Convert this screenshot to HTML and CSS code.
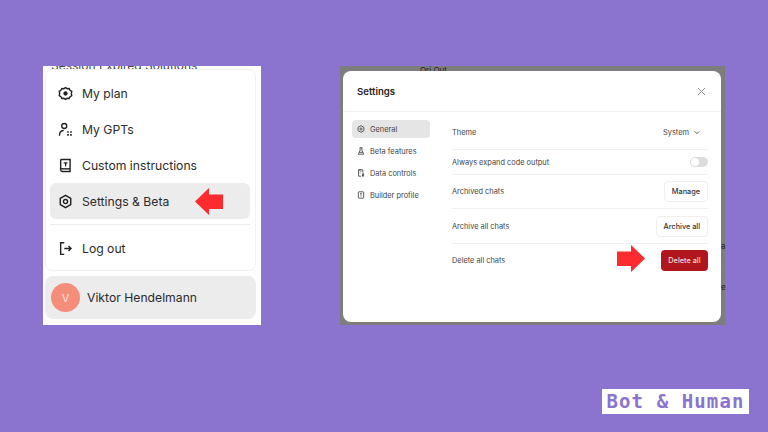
FILE: index.html
```html
<!DOCTYPE html>
<html lang="en">
<head>
    <meta charset="UTF-8">
    <meta name="viewport" content="width=device-width, initial-scale=1.0">
    <title>Delete all chats</title>
    <link rel="stylesheet" href="styles.css">
</head>
<body>
<div class="stage">

    <!-- left screenshot: account menu -->
    <div class="menu-shot">
        <div class="clipped-title">Session Expired Solutions</div>
        <div class="menu-card">
            <div class="menu-item">
                <svg class="menu-icon" viewBox="0 0 18 18"><path d="M9 2l2 1.2 2.400-.1 1.100 2.100 2 1.300L16 9l.5 2.500-2 1.300-1.100 2.100-2.400-.1L9 16l-2-1.200-2.400.1-1.100-2.100-2-1.300L2 9l-.5-2.500 2-1.300 1.100-2.100 2.400.1z" fill="none" stroke="#222" stroke-width="1.700"/><circle cx="9" cy="9" r="2.600" fill="#222"/></svg>
                <span>My plan</span>
            </div>
            <div class="menu-item">
                <svg class="menu-icon" viewBox="0 0 18 18"><circle cx="7.500" cy="4.800" r="3" fill="none" stroke="#222" stroke-width="1.600"/><path d="M1.800 16c0-3.400 1.600-5.400 4.400-5.800" fill="none" stroke="#222" stroke-width="1.600" stroke-linecap="round"/><path d="M11 11h2v2h-2zM14.500 11h2v2h-2zM11 14.500h2v2h-2zM14.500 14.500h2v2h-2z" fill="#222"/></svg>
                <span>My GPTs</span>
            </div>
            <div class="menu-item">
                <svg class="menu-icon" viewBox="0 0 18 18"><path d="M4 1.800h10.500v14.400H5.200a2 2 0 0 1-2-2V2.600z" fill="none" stroke="#222" stroke-width="1.700"/><path d="M3.500 13h11" stroke="#222" stroke-width="1.700"/><path d="M6.800 5h4.600v1.600H9.900V10H8.300V6.600H6.800z" fill="#222"/></svg>
                <span>Custom instructions</span>
            </div>
            <div class="menu-item menu-item-active">
                <svg class="menu-icon" viewBox="0 0 18 18"><path d="M9 1.600l6.300 3.700v7.400L9 16.400l-6.300-3.700V5.300z" fill="none" stroke="#222" stroke-width="1.700" stroke-linejoin="round"/><circle cx="9" cy="9" r="2.500" fill="none" stroke="#222" stroke-width="1.700"/></svg>
                <span>Settings &amp; Beta</span>
            </div>
            <div class="menu-divider"></div>
            <div class="menu-item">
                <svg class="menu-icon" viewBox="0 0 18 18"><path d="M7.500 2H3.200v14h4.300" fill="none" stroke="#222" stroke-width="1.700"/><path d="M7.500 9h8M12.600 6l3 3-3 3" fill="none" stroke="#222" stroke-width="1.700"/></svg>
                <span>Log out</span>
            </div>
        </div>
        <div class="user-row">
            <div class="avatar">V</div>
            <span>Viktor Hendelmann</span>
        </div>
        <svg class="arrow arrow-left" viewBox="0 0 28 27"><path d="M0 13.500L14 0v6.500h14v14.500H14v6z" fill="#fb2b2f"/></svg>
    </div>

    <!-- right screenshot: settings dialog -->
    <div class="settings-shot">
        <span class="peek peek-top">Ori Out</span>
        <span class="peek peek-a">a</span>
        <span class="peek peek-e">e</span>
        <div class="dialog">
            <div class="dialog-head">
                <h2>Settings</h2>
                <svg class="close-icon" viewBox="0 0 10 10"><path d="M1 1l8 8M9 1l-8 8" stroke="#8a8a8a" stroke-width="1.100"/></svg>
            </div>
            <div class="dialog-body">
                <div class="side-nav">
                    <div class="side-item side-item-active">
                        <svg class="side-icon" viewBox="0 0 12 12"><path d="M6 1l4.400 2.500v5L6 11 1.600 8.500v-5z" fill="none" stroke="#333" stroke-width="1.200"/><circle cx="6" cy="6" r="1.600" fill="none" stroke="#333" stroke-width="1.100"/></svg>
                        <span>General</span>
                    </div>
                    <div class="side-item">
                        <svg class="side-icon" viewBox="0 0 12 12"><path d="M4 1.200h4M4.700 1.200v3.600L2 10.800h8L7.300 4.800V1.200M3.400 8h5.200" fill="none" stroke="#333" stroke-width="1.200"/></svg>
                        <span>Beta features</span>
                    </div>
                    <div class="side-item">
                        <svg class="side-icon" viewBox="0 0 12 12"><path d="M6 1.200H2.400v9.600H6M2.400 1.200h6.400v4.300" fill="none" stroke="#333" stroke-width="1.200"/><path d="M4 3.800h3M4 6.200h2M8 7h2.500v1.300H8zM7.500 9.500H10v1.300H7.500z" stroke="#333" fill="#333" stroke-width="0.600"/></svg>
                        <span>Data controls</span>
                    </div>
                    <div class="side-item">
                        <svg class="side-icon" viewBox="0 0 12 12"><rect x="2" y="1.200" width="8" height="9.600" rx="1" fill="none" stroke="#333" stroke-width="1.200"/><path d="M4.800 3.400h2.400v1H6.500v3.800h-1V4.400h-.7z" fill="#333"/></svg>
                        <span>Builder profile</span>
                    </div>
                </div>
                <div class="rows">
                    <div class="row row-theme">
                        <span>Theme</span>
                        <span class="select">System
                            <svg class="chevron" viewBox="0 0 8 6"><path d="M1 1.500l3 3 3-3" fill="none" stroke="#333" stroke-width="1.100"/></svg>
                        </span>
                    </div>
                    <div class="row row-toggle">
                        <span>Always expand code output</span>
                        <span class="toggle"><span class="knob"></span></span>
                    </div>
                    <div class="row row-manage">
                        <span>Archived chats</span>
                        <button class="btn">Manage</button>
                    </div>
                    <div class="row row-archive">
                        <span>Archive all chats</span>
                        <button class="btn">Archive all</button>
                    </div>
                    <div class="row row-delete">
                        <span>Delete all chats</span>
                        <button class="btn btn-danger">Delete all</button>
                    </div>
                </div>
            </div>
        </div>
        <svg class="arrow arrow-right" viewBox="0 0 28 27"><path d="M28 13.500L14 0v6.500H0v14.500h14v6z" fill="#fb2b2f"/></svg>
    </div>

    <div class="logo">Bot &amp; Human</div>
</div>
</body>
</html>
```
FILE: styles.css
```css
body {
    margin: 0;
    background-color: #8a74cf;
    font-family: Inter, "Liberation Sans", sans-serif;
    color: #2b2b2b;
    overflow: hidden;
}

.stage {
    position: relative;
    width: 768px;
    height: 432px;
}

/* left screenshot */
.menu-shot {
    position: absolute;
    left: 43px;
    top: 66px;
    width: 218px;
    height: 259px;
    box-sizing: border-box;
    padding: 0 5px 0 2px;
    background-color: #fff;
    overflow: hidden;
    display: flex;
    flex-direction: column;
}

/* only the lower half of this line shows in the screenshot */
.clipped-title {
    height: 4px;
    flex: none;
    line-height: 0;
    margin-left: 6px;
    overflow: hidden;
    font-size: 12px;
    color: #444;
    white-space: nowrap;
}

.menu-card {
    margin-top: -1px;
    height: 202px;
    flex: none;
    box-sizing: border-box;
    padding: 5px 5px 0 4px;
    border: 1px solid #f1f1f1;
    border-radius: 7px;
}

.menu-item {
    height: 36px;
    display: flex;
    align-items: center;
    gap: 9px;
    padding-left: 8px;
    border-radius: 6px;
    font-size: 12.200px;
}

.menu-item-active {
    background-color: #ececec;
}

.menu-icon {
    width: 15px;
    height: 15px;
    flex: none;
}

.menu-divider {
    height: 1px;
    margin: 5px 0 5px;
    background-color: #ececec;
}

.user-row {
    height: 43px;
    flex: none;
    margin-top: 5px;
    display: flex;
    align-items: center;
    gap: 7px;
    padding-left: 6px;
    background-color: #ececec;
    border-radius: 8px;
    font-size: 12.200px;
}

.avatar {
    width: 29px;
    height: 29px;
    border-radius: 50%;
    background-color: #f48e7a;
    color: #f9e0da;
    font-size: 11px;
    display: flex;
    align-items: center;
    justify-content: center;
}

.arrow {
    position: absolute;
    width: 28px;
    height: 27px;
}

.arrow-left {
    left: 152px;
    top: 122px;
}

/* right screenshot */
.settings-shot {
    position: absolute;
    left: 340px;
    top: 66px;
    width: 385px;
    height: 259px;
    box-sizing: border-box;
    padding: 5px 4px 3px 3px;
    background-color: #7d7d7d;
}

.peek {
    position: absolute;
    font-size: 8px;
    color: #222;
}

.peek-top {
    left: 80px;
    top: 0;
    height: 5px;
    line-height: 8px;
    overflow: hidden;
}

.peek-a {
    left: 381px;
    top: 175px;
}

.peek-e {
    left: 381px;
    top: 216px;
}

.dialog {
    height: 100%;
    background-color: #fff;
    border-radius: 8px;
    display: flex;
    flex-direction: column;
    position: relative;
}

.dialog-head {
    height: 40px;
    flex: none;
    display: flex;
    align-items: center;
    justify-content: space-between;
    padding: 0 15px 0 14px;
    border-bottom: 1px solid #f0f0f0;
}

.dialog-head h2 {
    margin: 0;
    font-size: 9.600px;
    font-weight: 600;
    color: #222;
}

.close-icon {
    width: 9px;
    height: 9px;
}

.dialog-body {
    flex: 1;
    display: flex;
    padding: 8px 13px 0 9px;
    gap: 22px;
}

.side-nav {
    width: 78px;
    flex: none;
    display: flex;
    flex-direction: column;
    gap: 4px;
}

.side-item {
    height: 18px;
    display: flex;
    align-items: center;
    gap: 5px;
    padding-left: 5px;
    border-radius: 4px;
    font-size: 7.400px;
    color: #444;
}

.side-item-active {
    background-color: #e5e5e5;
}

.side-icon {
    width: 8px;
    height: 8px;
    flex: none;
}

.rows {
    flex: 1;
    font-size: 7.400px;
    color: #444;
}

.row {
    display: flex;
    align-items: center;
    justify-content: space-between;
    border-bottom: 1px solid #f0f0f0;
}

.row-theme {
    height: 33px;
    margin-top: -8px;
    padding-top: 4px;
}

.row-toggle {
    height: 24px;
}

.row-manage {
    height: 33px;
}

.row-archive {
    height: 34px;
}

.row-delete {
    height: 33px;
    border-bottom: none;
}

.select {
    display: flex;
    align-items: center;
    gap: 5px;
    padding-right: 8px;
}

.chevron {
    width: 6px;
    height: 5px;
}

.toggle {
    width: 18px;
    height: 10px;
    border-radius: 5px;
    background-color: #dcdcdc;
    display: flex;
    align-items: center;
    padding-left: 1px;
    box-sizing: border-box;
}

.knob {
    width: 8px;
    height: 8px;
    border-radius: 50%;
    background-color: #fff;
}

.btn {
    height: 21px;
    box-sizing: border-box;
    padding: 0 7px;
    border: 1px solid #efefef;
    border-radius: 4px;
    background-color: #fff;
    font-family: inherit;
    font-size: 7.300px;
    font-weight: 500;
    color: #333;
}

.btn-danger {
    border: none;
    padding: 0 7.500px;
    background-color: #b0171d;
    color: #f6dada;
}

.arrow-right {
    left: 277px;
    top: 179px;
}

/* watermark */
.logo {
    position: absolute;
    left: 602px;
    top: 389px;
    width: 147px;
    height: 25px;
    background-color: #fff;
    color: #8a74cf;
    font-family: "DejaVu Sans Mono", monospace;
    font-size: 19px;
    font-weight: bold;
    line-height: 25px;
    letter-spacing: 1.100px;
    text-align: center;
    white-space: nowrap;
    overflow: hidden;
}
```
